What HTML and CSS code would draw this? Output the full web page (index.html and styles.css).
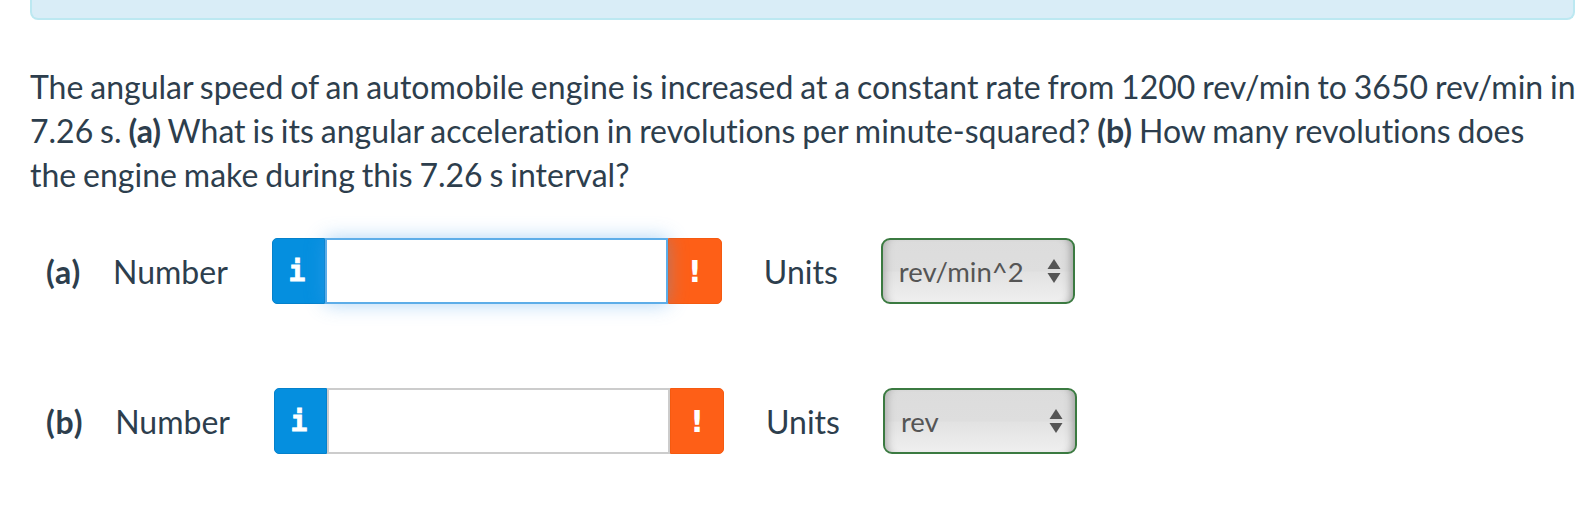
FILE: index.html
```html
<!DOCTYPE html>
<html lang="en">
<head>
    <meta charset="UTF-8">
    <title>Question</title>
    <link rel="stylesheet" href="styles.css">
</head>
<body>
    <div class="notice"></div>

    <p class="question">The angular speed of an automobile engine is increased at a constant rate from 1200 rev/min to 3650 rev/min in 7.26 s. <b>(a)</b> What is its angular acceleration in revolutions per minute-squared? <b>(b)</b> How many revolutions does the engine make during this 7.26 s interval?</p>

    <div class="answer-row">
        <b class="part">(a)</b>
        <span class="label">Number</span>
        <div class="input-group focused">
            <span class="addon addon-info">i</span>
            <input class="number-input" type="text">
            <span class="addon addon-warn">!</span>
        </div>
        <span class="label units-label">Units</span>
        <div class="select-wrap">
            <select class="units-select">
                <option>rev/min^2</option>
            </select>
            <svg class="arrows" width="14" height="26" viewBox="0 0 14 26">
                <path d="M7 1 L13.5 11 L0.5 11 Z"/>
                <path d="M0.5 15 L13.5 15 L7 25 Z"/>
            </svg>
        </div>
    </div>

    <div class="answer-row">
        <b class="part">(b)</b>
        <span class="label">Number</span>
        <div class="input-group">
            <span class="addon addon-info">i</span>
            <input class="number-input" type="text">
            <span class="addon addon-warn">!</span>
        </div>
        <span class="label units-label">Units</span>
        <div class="select-wrap">
            <select class="units-select">
                <option>rev</option>
            </select>
            <svg class="arrows" width="14" height="26" viewBox="0 0 14 26">
                <path d="M7 1 L13.5 11 L0.5 11 Z"/>
                <path d="M0.5 15 L13.5 15 L7 25 Z"/>
            </svg>
        </div>
    </div>
</body>
</html>
```

FILE: styles.css
```css
/* General Styles */
body {
    font-family: Lato, Arial, sans-serif;
    font-variant-ligatures: none;
    color: #2d3e4d;
    background-color: #fff;
    margin: 0;
    padding: 0 19px 0 30px;
    overflow: hidden;
}

.notice {
    height: 18px;
    background-color: #d9edf7;
    border: 2px solid #bce8f1;
    border-top: none;
    border-radius: 0 0 8px 8px;
}

.question {
    font-size: 32px;
    word-spacing: -1.3px;
    line-height: 44px;
    margin: 45px -1px 0 0;
}

/* Answer rows */
.answer-row {
    display: flex;
    align-items: center;
    height: 66px;
    padding-left: 16px;
    font-size: 32px;
    margin-top: 84px;
}

.question + .answer-row {
    margin-top: 41px;
}

.part {
    letter-spacing: 0.8px;
    margin-right: 32px;
}

.label {
    margin-right: 44px;
}

.input-group {
    display: flex;
    height: 66px;
}

.addon {
    flex: 0 0 53px;
    box-sizing: border-box;
    display: flex;
    justify-content: center;
    align-items: center;
    color: #fff;
    font-weight: bold;
}

.addon-info {
    font-family: "DejaVu Sans Mono", monospace;
    font-size: 28px;
    -webkit-text-stroke: 0.8px #fff;
    padding-right: 3px;
    background-color: #058fdf;
    border: 1px solid #0581cb;
    border-radius: 5px 0 0 5px;
}

.addon-warn {
    flex-basis: 54px;
    font-family: "DejaVu Sans", sans-serif;
    font-size: 30px;
    background-color: #fe5f17;
    border: 1px solid #f55a10;
    border-radius: 0 5px 5px 0;
}

.number-input {
    width: 343px;
    box-sizing: border-box;
    border: 2px solid #ccc;
    background-color: #fff;
    padding: 0;
    margin: 0;
    outline: none;
}

/* glow sits over the two addons */
.focused .number-input {
    position: relative;
    z-index: 1;
    border-color: #5dade8;
    box-shadow: 0 0 18px rgba(70, 160, 235, 0.45);
}

.units-label {
    margin-left: 42px;
    margin-right: 43px;
}

.select-wrap {
    position: relative;
    width: 194px;
    height: 66px;
}

.units-select {
    appearance: none;
    width: 100%;
    height: 100%;
    box-sizing: border-box;
    border: 2px solid #3b7a41;
    border-radius: 9px;
    padding: 0 0 0 16px;
    margin: 0;
    font-family: Lato, Arial, sans-serif;
    font-size: 27.5px;
    color: #555;
    background: linear-gradient(to bottom, #dcdcdc 0%, #dedede 50%, #e2e2e2 52%, #efefef 100%);
    box-shadow: inset 10px 0 8px -8px #aaa, inset -10px 0 8px -8px #999;
    outline: none;
}

.arrows {
    position: absolute;
    top: 20px;
    right: 14px;
    fill: #555;
    pointer-events: none;
}
```
